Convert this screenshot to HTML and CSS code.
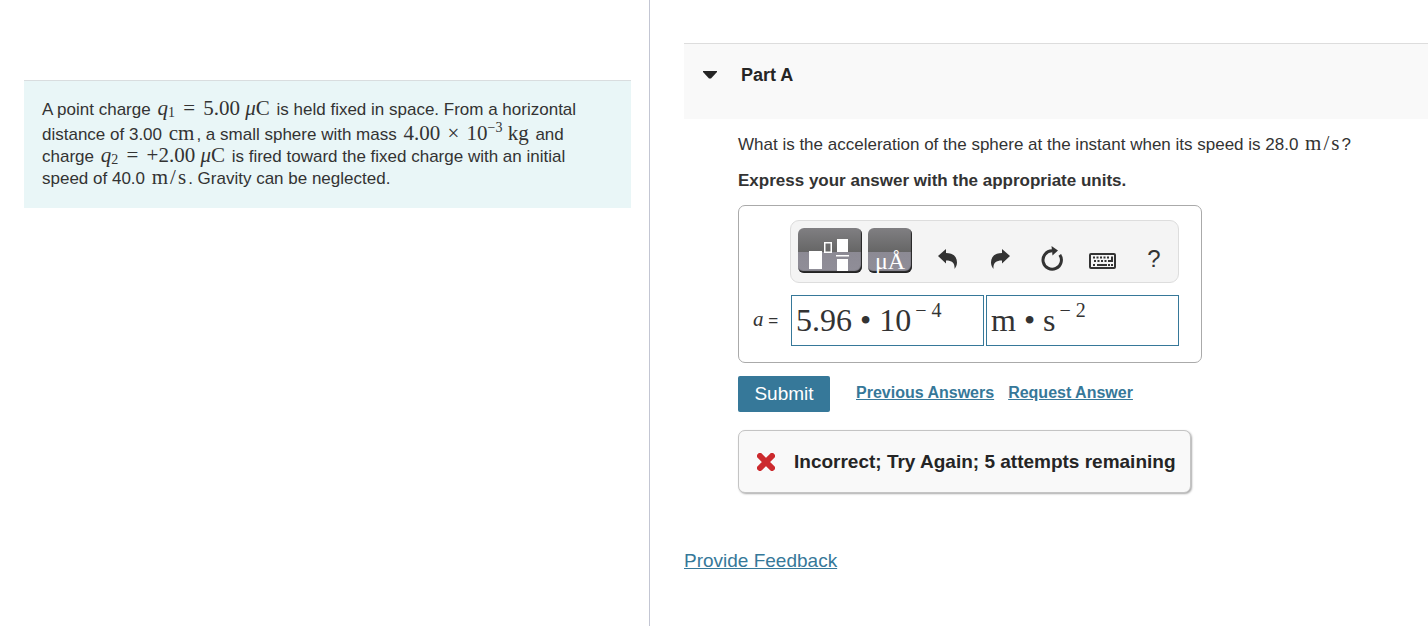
FILE: index.html
```
<!DOCTYPE html>
<html lang="en">
<head>
    <meta charset="UTF-8" />
    <meta name="viewport" content="width=device-width, initial-scale=1.0" />
    <title>Part A</title>
    <link rel="stylesheet" href="styles.css">
</head>
<body>

<div class="page">
    <aside class="problem">
        <p class="problem-text">
            A point charge <span class="math"><i>q</i><sub>1</sub> <span class="op">=</span> 5.00 <i>μ</i>C</span> is held fixed in space. From a horizontal<br>
            distance of 3.00 <span class="math">cm</span>, a small sphere with mass <span class="math">4.00 <span class="times">×</span> 10<sup>−3</sup> kg</span> and<br>
            charge <span class="math"><i>q</i><sub>2</sub> <span class="op">=</span> +2.00 <i>μ</i>C</span> is fired toward the fixed charge with an initial<br>
            speed of 40.0 <span class="math">m<span class="slash">/</span>s</span>. Gravity can be neglected.
        </p>
    </aside>

    <main class="work">
        <h2 class="part-header">
            <button type="button" class="part-toggle" aria-expanded="true">
                <svg class="caret" width="14" height="8" viewBox="0 0 14 8"><path d="M0 0h14v1L8 7.5H6L0 1z" fill="#252525"/></svg>
                Part A
            </button>
        </h2>

        <form class="part-body" action="#" onsubmit="event.preventDefault();">
            <p class="question">What is the acceleration of the sphere at the instant when its speed is 28.0 <span class="math">m<span class="slash">/</span>s</span>?</p>
            <p class="instruction">Express your answer with the appropriate units.</p>

            <div class="answer-box">
                <div class="toolbar">
                    <button type="button" class="tool-dark tool-templates" aria-label="Templates">
                        <svg width="64" height="45" viewBox="0 0 64 45">
                            <g fill="#fff">
                                <path d="M11 23h13v18H11zM39 11h11v13H39zM39 31h11v12H39zM38 27h13v1.5H38z"/>
                                <path d="M26 14h8v11h-8zM27.5 15.5v8h5v-8z" fill-rule="evenodd"/>
                            </g>
                        </svg>
                    </button>
                    <button type="button" class="tool-dark tool-units" aria-label="Units">μÅ</button>
                    <button type="button" class="tool tool-undo" aria-label="Undo">
                        <svg width="20" height="20" viewBox="0 0 20 20"><path d="M0 7 8 0v4c7 0 11 3.5 11 9.5 0 2.500-1 4.500-2.500 6.500 .5-5.500-2-8.500-8.500-8.500V14.500z" fill="#333"/></svg>
                    </button>
                    <button type="button" class="tool tool-redo" aria-label="Redo">
                        <svg width="20" height="20" viewBox="0 0 20 20"><path d="M20 7 12 0v4C5 4 1 7.500 1 13.500c0 2.500 1 4.500 2.500 6.500-.5-5.500 2-8.500 8.500-8.500V14.500z" fill="#333"/></svg>
                    </button>
                    <button type="button" class="tool tool-reset" aria-label="Reset">
                        <svg width="22" height="26" viewBox="0 0 22 26">
                            <path d="M18.800 8.800A9.200 9.200 0 1 1 11 4.800" fill="none" stroke="#333" stroke-width="3"/>
                            <path d="M10.500 0 17 4.500 11.500 9.500z" fill="#333"/>
                        </svg>
                    </button>
                    <button type="button" class="tool tool-keyboard" aria-label="Keyboard shortcuts">
                        <svg width="27" height="16" viewBox="0 0 27 16">
                            <rect x="1" y="1" width="25" height="14" rx="1" fill="none" stroke="#333" stroke-width="2"/>
                            <path d="M4 4.500h17M5 8h16" stroke="#333" stroke-width="2" stroke-dasharray="2 1.500"/>
                            <path d="M22 3.500h2V9h-4V7h2zM4 11h2v2H4zM8 11h10v2H8zM19 11h2v2h-2zM22 11h2v2h-2z" fill="#333"/>
                        </svg>
                    </button>
                    <button type="button" class="tool tool-help" aria-label="Help">?</button>
                </div>

                <div class="answer-row">
                    <label class="answer-label" for="value"><i>a</i> =</label>
                    <div class="math-field">
                        <input type="text" id="value" name="value" aria-describedby="value-math" />
                        <span class="math-view" id="value-math">5.96 • 10<sup>− 4</sup></span>
                    </div>
                    <div class="math-field">
                        <input type="text" id="units" name="units" aria-label="Units" aria-describedby="units-math" />
                        <span class="math-view" id="units-math">m • s<sup>− 2</sup></span>
                    </div>
                </div>
            </div>

            <div class="actions">
                <button type="submit" class="submit">Submit</button>
                <a href="#" class="action-link">Previous Answers</a>
                <a href="#" class="action-link">Request Answer</a>
            </div>

            <div class="feedback" role="status">
                <svg width="18" height="18" viewBox="0 0 18 18"><path d="M3 3l12 12M15 3L3 15" stroke="#cc2a2e" stroke-width="6" stroke-linecap="round"/></svg>
                Incorrect; Try Again; 5 attempts remaining
            </div>
        </form>

        <a href="#" class="provide-feedback">Provide Feedback</a>
    </main>
</div>

</body>
</html>
```
FILE: styles.css
```
* {
    box-sizing: border-box;
}
body {
    margin: 0;
    background: #fff;
    color: #333;
    font-family: "Liberation Sans", Arial, sans-serif;
    font-size: 17px;
    line-height: 22px;
}
button, input {
    font-family: inherit;
    color: inherit;
}
p {
    margin: 0;
}
a {
    color: #367899;
}
.page {
    display: flex;
    min-height: 100vh;
}

/* Problem statement */
.problem {
    flex: 0 0 650px;
    padding: 80px 18px 0 24px;
    border-right: 1px solid #c3c6d3;
}
.problem-text {
    padding: 18px;
    background: #e9f6f7;
    border-top: 1px solid #d9dddf;
}
.math {
    margin: 0 2px;
    font-family: "Liberation Serif", "Times New Roman", serif;
    font-size: 21px;
    line-height: 0;
}
.math sub, .math sup {
    font-size: 14px;
    line-height: 0;
}
.math sub {
    vertical-align: -2px;
}
.math sup {
    line-height: 14px;
    vertical-align: 8px;
}
.op {
    margin: 0 3px;
}
.times {
    margin: 0 2px;
}
.slash {
    margin: 0 2px;
}

/* Part */
.work {
    flex: 1;
    padding: 43px 0 40px 34px;
}
.part-header {
    margin: 0;
    height: 76px;
    background: #f9f9f9;
    border-top: 1px solid #ddd;
}
.part-toggle {
    display: flex;
    align-items: center;
    gap: 24px;
    padding: 20px 19px;
    border: 0;
    background: none;
    color: #252525;
    font-size: 18px;
    font-weight: bold;
    line-height: 22px;
    cursor: pointer;
}
.part-body {
    padding: 15px 0 0 54px;
}
.instruction {
    margin-top: 14px;
    font-weight: bold;
}

/* Answer entry */
.answer-box {
    width: 464px;
    max-width: 100%;
    margin-top: 13px;
    padding: 14px 22px 16px 14px;
    border: 1px solid #aaa;
    border-radius: 7px;
}
.toolbar {
    display: flex;
    align-items: flex-start;
    height: 63px;
    margin-left: 37px;
    padding: 7px;
    border: 1px solid #ddd;
    border-radius: 9px;
    background: #f4f4f4;
}
.toolbar button {
    padding: 0;
    cursor: pointer;
}
.toolbar svg {
    display: block;
}
.tool-dark {
    height: 45px;
    border: 0;
    border-radius: 6px;
    background: linear-gradient(#807f82, #666 53%, #8c8a94 53%, #908e98);
    box-shadow: inset -1px -2px 1px #222;
    color: #fff;
}
.tool-templates {
    width: 64px;
}
.tool-units {
    width: 44px;
    margin-left: 6px;
}
.toolbar .tool-units {
    padding-top: 20px;
    font-family: "Liberation Serif", "Times New Roman", serif;
    font-size: 24px;
    line-height: 24px;
}
.tool {
    display: flex;
    justify-content: center;
    align-items: center;
    width: 28px;
    height: 28px;
    margin: 17px 0 0 24px;
    border: 0;
    background: none;
    color: #333;
}
.tool-undo {
    margin-left: 22px;
}
.tool-keyboard {
    margin-top: 19px;
    margin-left: 22px;
}
.tool-help {
    font-size: 24px;
    line-height: 28px;
}
.answer-row {
    display: flex;
    align-items: center;
    gap: 2px;
    margin-top: 12px;
}
.answer-label {
    width: 36px;
    font-size: 17px;
}
.answer-label i {
    font-family: "Liberation Serif", "Times New Roman", serif;
    font-size: 21px;
    line-height: 0;
}
.math-field {
    position: relative;
    flex: 1;
}
.math-field input {
    display: block;
    width: 100%;
    height: 51px;
    padding: 0 4px;
    border: 1px solid #367899;
    border-radius: 0;
    background: #fff;
    font-size: 32px;
}
/* typeset value shown over the entry box */
.math-view {
    position: absolute;
    top: 0;
    left: 5px;
    font-family: "Liberation Serif", "Times New Roman", serif;
    font-size: 32px;
    line-height: 51px;
    white-space: nowrap;
    pointer-events: none;
}
.math-view sup {
    margin-left: 4px;
    font-size: 20px;
    line-height: 0;
    vertical-align: 14px;
}

/* Actions */
.actions {
    display: flex;
    align-items: center;
    gap: 14px;
    margin-top: 13px;
}
.submit {
    width: 92px;
    height: 36px;
    margin-right: 12px;
    padding: 0;
    border: 0;
    border-radius: 2px;
    background: #367899;
    color: #fff;
    font-size: 19px;
    cursor: pointer;
}
.action-link {
    margin-bottom: 2px;
    font-size: 16px;
    font-weight: bold;
}
.feedback {
    display: inline-flex;
    align-items: center;
    gap: 19px;
    height: 63px;
    margin-top: 18px;
    padding: 0 14px 0 18px;
    border: 1px solid #c4c4c4;
    border-radius: 7px;
    background: #f9f9f9;
    box-shadow: 1px 1px 2px #aaa;
    color: #252525;
    font-size: 19px;
    font-weight: bold;
}
.provide-feedback {
    display: inline-block;
    margin-top: 57px;
    font-size: 19px;
}
```
